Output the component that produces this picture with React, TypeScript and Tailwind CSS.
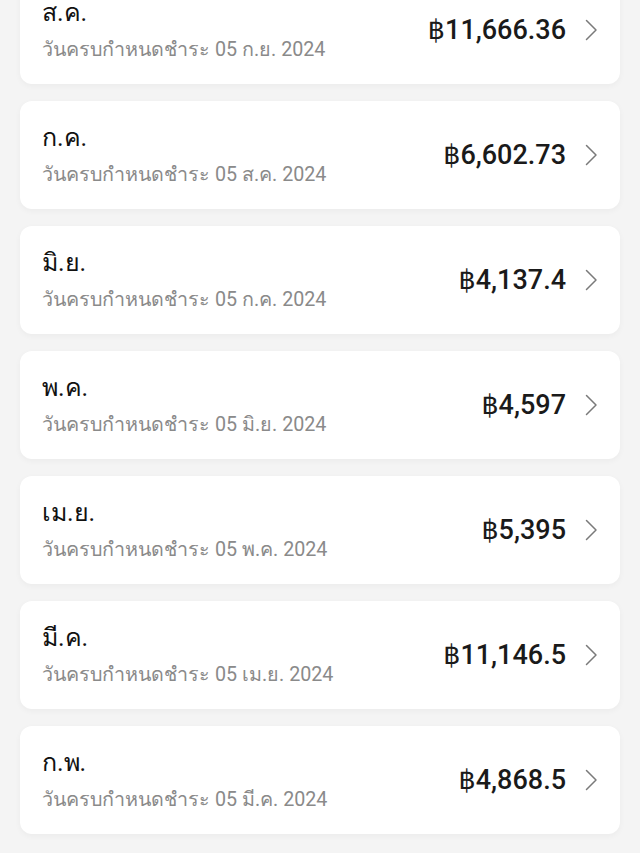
const bills = [
  { month: "ส.ค.", due: "05 ก.ย. 2024", amount: "฿11,666.36" },
  { month: "ก.ค.", due: "05 ส.ค. 2024", amount: "฿6,602.73" },
  { month: "มิ.ย.", due: "05 ก.ค. 2024", amount: "฿4,137.4" },
  { month: "พ.ค.", due: "05 มิ.ย. 2024", amount: "฿4,597" },
  { month: "เม.ย.", due: "05 พ.ค. 2024", amount: "฿5,395" },
  { month: "มี.ค.", due: "05 เม.ย. 2024", amount: "฿11,146.5" },
  { month: "ก.พ.", due: "05 มี.ค. 2024", amount: "฿4,868.5" },
];

function Chevron() {
  return (
    <svg width="14" height="22" viewBox="0 0 14 22" fill="none" className="shrink-0">
      <path d="M2.5 1.5 L12 11 L2.5 20.5" stroke="#7a7a7a" strokeWidth="1.5" strokeLinecap="round" strokeLinejoin="round" />
    </svg>
  );
}

function BillCard({ month, due, amount }: { month: string; due: string; amount: string }) {
  return (
    <div className="flex h-[108px] items-center rounded-xl bg-white pl-[22px] pr-[22px] shadow-[0_2px_6px_rgba(0,0,0,0.04)]">
      <div className="flex flex-1 flex-col">
        <span className="text-[25px] leading-[30px] text-[#111]">{month}</span>
        <span className="mt-[10px] text-[19.7px] leading-[24px] text-[#8a8a8a]">วันครบกำหนดชำระ {due}</span>
      </div>
      <span className="text-[27px] font-medium leading-[30px] text-[#1a1a1a]">{amount}</span>
      <div className="ml-[18px]">
        <Chevron />
      </div>
    </div>
  );
}

export default function App() {
  return (
    <div
      className="min-h-[853px] w-[640px] overflow-hidden bg-[#f4f4f4]"
      style={{ fontFamily: "Roboto, 'Noto Sans', 'DejaVu Sans', sans-serif" }}
    >
      <div className="-mt-[24px] flex flex-col gap-[17px] px-5">
        {bills.map((b) => (
          <BillCard key={b.month} {...b} />
        ))}
      </div>
    </div>
  );
}
